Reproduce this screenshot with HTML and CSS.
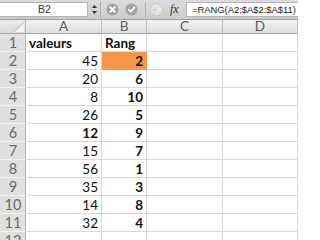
FILE: index.html
```html
<!DOCTYPE html>
<html lang="fr">
<head>
<meta charset="utf-8">
<title>Feuille</title>
<link rel="stylesheet" href="styles.css">
</head>
<body>
<div class="app">
  <div class="toolbar">
    <div class="namebox">B2</div>
    <div class="stepper">
      <svg width="7" height="11" viewBox="0 0 7 11"><path d="M1 4 L3.5 1 L6 4 Z M1 7 L3.5 10 L6 7 Z" fill="#333"/></svg>
    </div>
    <div class="sep"></div>
    <div class="icon">
      <svg width="13" height="13" viewBox="0 0 13 13"><circle cx="6.5" cy="6.5" r="6" fill="#a4a4a4"/><path d="M4.2 4.2 L8.8 8.8 M8.8 4.2 L4.2 8.8" stroke="#fff" stroke-width="1.8" stroke-linecap="round"/></svg>
    </div>
    <div class="icon">
      <svg width="13" height="13" viewBox="0 0 13 13"><circle cx="6.5" cy="6.5" r="6" fill="#a4a4a4"/><path d="M3.8 6.8 L5.7 8.6 L9.3 4.5" stroke="#fff" stroke-width="1.8" fill="none" stroke-linecap="round" stroke-linejoin="round"/></svg>
    </div>
    <div class="sep"></div>
    <div class="icon faded">
      <svg width="13" height="13" viewBox="0 0 13 13"><circle cx="6.5" cy="6.5" r="6" fill="#e6e6e6" stroke="#c4c4c4" stroke-width="0.8"/><path d="M3.5 6.5 H6" stroke="#c9c9c9" stroke-width="1.6" stroke-linecap="round"/></svg>
    </div>
    <span class="fx">fx</span>
    <div class="formula">=RANG(A2;$A$2:$A$11)</div>
  </div>
  <div class="sheet">
    <div class="corner"><svg width="10" height="10" viewBox="0 0 10 10"><path d="M10 0 L10 10 L0 10 Z" fill="#f4f4f4"/><path d="M10 0 L0 10" stroke="#bcbcbc" stroke-width="1"/></svg></div>
    <div class="colhead">A</div>
    <div class="colhead">B</div>
    <div class="colhead">C</div>
    <div class="colhead">D</div>

    <div class="rowhead">1</div><div class="cell bold left">valeurs</div><div class="cell bold left">Rang</div><div class="cell"></div><div class="cell"></div>
    <div class="rowhead">2</div><div class="cell">45</div><div class="cell bold sel">2</div><div class="cell"></div><div class="cell"></div>
    <div class="rowhead">3</div><div class="cell">20</div><div class="cell bold">6</div><div class="cell"></div><div class="cell"></div>
    <div class="rowhead">4</div><div class="cell">8</div><div class="cell bold">10</div><div class="cell"></div><div class="cell"></div>
    <div class="rowhead">5</div><div class="cell">26</div><div class="cell bold">5</div><div class="cell"></div><div class="cell"></div>
    <div class="rowhead">6</div><div class="cell bold">12</div><div class="cell bold">9</div><div class="cell"></div><div class="cell"></div>
    <div class="rowhead">7</div><div class="cell">15</div><div class="cell bold">7</div><div class="cell"></div><div class="cell"></div>
    <div class="rowhead">8</div><div class="cell">56</div><div class="cell bold">1</div><div class="cell"></div><div class="cell"></div>
    <div class="rowhead">9</div><div class="cell">35</div><div class="cell bold">3</div><div class="cell"></div><div class="cell"></div>
    <div class="rowhead">10</div><div class="cell">14</div><div class="cell bold">8</div><div class="cell"></div><div class="cell"></div>
    <div class="rowhead">11</div><div class="cell">32</div><div class="cell bold">4</div><div class="cell"></div><div class="cell"></div>
    <div class="rowhead">12</div><div class="cell"></div><div class="cell"></div><div class="cell"></div><div class="cell"></div>
  </div>
</div>
</body>
</html>
```

FILE: styles.css
```css
* { box-sizing: border-box; }
html, body { margin: 0; padding: 0; background: #fff; }
body { width: 298px; height: 240px; overflow: hidden; }

.app { width: 298px; }

.toolbar {
  display: flex;
  align-items: center;
  height: 20px;
  background: linear-gradient(#dcdcdc, #cbcbcb);
  border-bottom: 1px solid #9e9e9e;
  font-family: "Liberation Sans", Arial, sans-serif;
}
.namebox {
  width: 88px;
  height: 15px;
  background: #fff;
  border: 1px solid #b4b4b4;
  border-left: none;
  font-size: 10.5px;
  color: #333;
  text-align: center;
  line-height: 13px;
  padding-left: 2px;
}
.stepper {
  width: 10px;
  display: flex;
  justify-content: center;
  margin-left: 1px;
}
.stepper svg { display: block; }
.sep {
  width: 1px;
  height: 15px;
  background: #b2b2b2;
  margin: 0 5px 0 1px;
}
.icon { display: flex; margin-right: 6px; }
.icon svg { display: block; }
.icon.faded { margin-left: -1px; margin-right: 7px; }
.fx {
  font-family: "Liberation Serif", "Times New Roman", serif;
  font-style: italic;
  font-size: 12px;
  color: #333;
  width: 14px;
}
.formula {
  flex: 1;
  min-width: 0;
  height: 15px;
  margin-left: 2px;
  background: #fff;
  border: 1px solid #b4b4b4;
  border-right: none;
  font-size: 9.4px;
  color: #222;
  line-height: 13px;
  padding-left: 5px;
  white-space: nowrap;
  overflow: hidden;
}

.sheet {
  display: grid;
  grid-template-columns: 26px 76px 45px 76px 75px;
  grid-template-rows: 14px repeat(12, 18px);
  font-family: Lato, "Liberation Sans", sans-serif;
}
.corner {
  background: linear-gradient(#ececec, #dadada);
  border-right: 1px solid #b8b8b8;
  border-bottom: 1px solid #a8a8a8;
  display: flex;
  justify-content: flex-end;
  align-items: flex-end;
  padding: 0 1px 1px 0;
}
.corner svg { display: block; }
.colhead {
  background: linear-gradient(#f2f2f2, #dedede);
  border-right: 1px solid #c0c0c0;
  border-bottom: 1px solid #a8a8a8;
  color: #5c5c5c;
  font-size: 13.5px;
  line-height: 13px;
  text-align: center;
}
.rowhead {
  background: #e0e0e0;
  border-right: 1px solid #b8b8b8;
  border-bottom: 1px solid #f2f2f2;
  color: #6a6a6a;
  font-size: 14.5px;
  line-height: 17px;
  text-align: center;
  padding-left: 1px;
}
.cell {
  border-right: 1px solid #d8d8d8;
  border-bottom: 1px solid #d8d8d8;
  font-size: 13.5px;
  line-height: 17px;
  color: #111;
  text-align: right;
  padding: 1px 3px 0 3px;
  white-space: nowrap;
}
.cell.left { text-align: left; }
.bold { font-weight: 700; }
.cell.sel { background: #f5964b; border-color: #f5964b; }
```
